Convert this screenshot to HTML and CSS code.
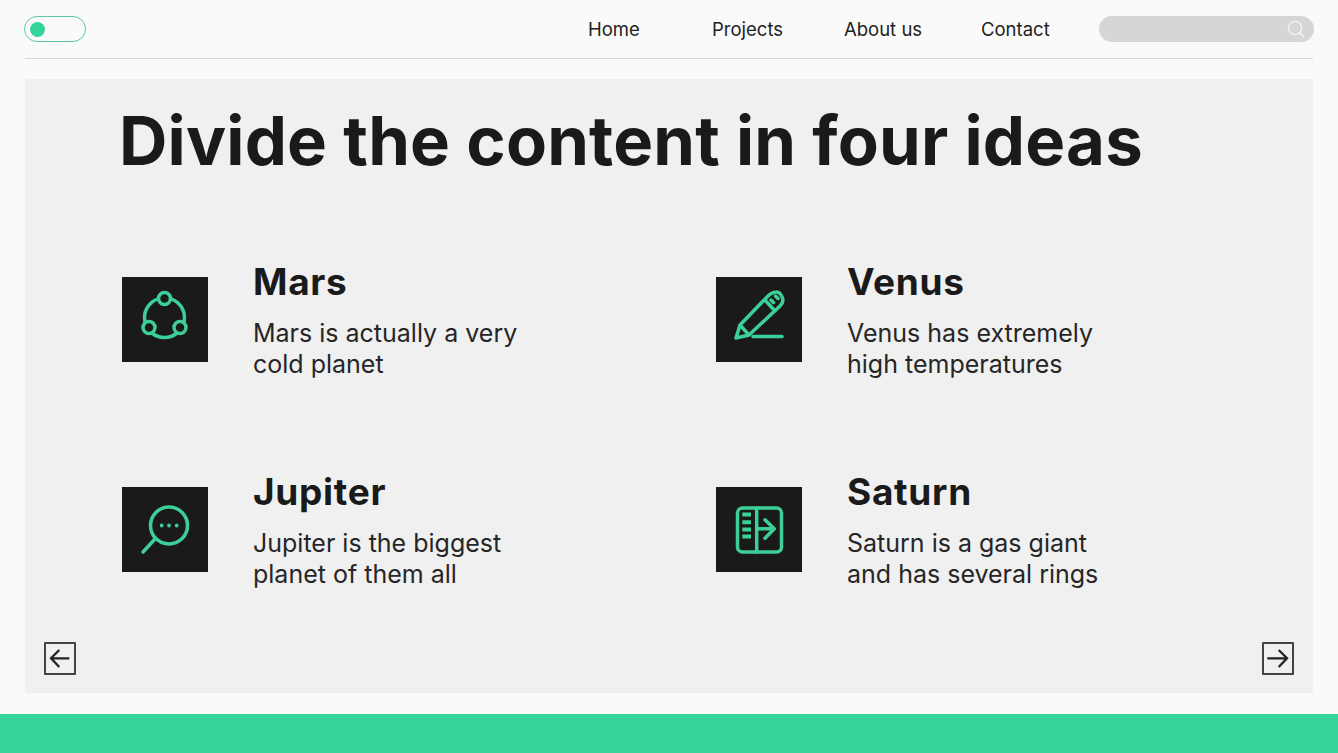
FILE: index.html
```html
<!DOCTYPE html>
<html lang="en">
<head>
<meta charset="utf-8">
<title>Divide the content in four ideas</title>
<link rel="stylesheet" href="styles.css">
</head>
<body>
<header class="topbar">
  <div class="toggle"><span class="toggle-knob"></span></div>
  <nav class="nav">
    <a class="nav-home">Home</a>
    <a class="nav-projects">Projects</a>
    <a class="nav-about">About us</a>
    <a class="nav-contact">Contact</a>
  </nav>
  <div class="search">
    <svg class="search-icon" viewBox="0 0 18 18"><circle cx="8" cy="8" r="6.6"/><path d="M12.8 12.8 16.8 17"/></svg>
  </div>
</header>
<main class="panel">
  <h1 class="title">Divide the content in four ideas</h1>
  <section class="ideas">
    <article class="idea">
      <div class="tile">
        <svg class="tile-icon" viewBox="0 0 60 60"><circle cx="29.500" cy="8.500" r="6"/><circle cx="14" cy="37.500" r="6"/><circle cx="45" cy="37.500" r="6"/><path d="M23 8.800A20 20 0 0 0 10 32M36 8.800A20 20 0 0 1 49 32M17.500 43.500A20 20 0 0 0 41.500 43.500"/></svg>
      </div>
      <div class="idea-text">
        <h2>Mars</h2>
        <p>Mars is actually a very<br>cold planet</p>
      </div>
    </article>
    <article class="idea">
      <div class="tile">
        <svg class="tile-icon" viewBox="0 0 60 60"><path d="M7 48 11 35 39 6C44 1 50 1 52 5 55 9 54 13 51 16L20 45ZM11 35 20 45M36 10 46 21M42 10 44.500 12.500M46.500 6 49 8.500"/><path d="M24 46.500H53"/></svg>
      </div>
      <div class="idea-text">
        <h2>Venus</h2>
        <p>Venus has extremely<br>high temperatures</p>
      </div>
    </article>
    <article class="idea">
      <div class="tile">
        <svg class="tile-icon" viewBox="0 0 60 60"><circle cx="34" cy="25.500" r="18.500"/><path d="M20 39 8 52"/><path class="dots" d="M26.700 25.500h.01M34 25.500h.01M41.700 25.500h.01"/></svg>
      </div>
      <div class="idea-text">
        <h2>Jupiter</h2>
        <p>Jupiter is the biggest<br>planet of them all</p>
      </div>
    </article>
    <article class="idea">
      <div class="tile">
        <svg class="tile-icon" viewBox="0 0 60 60"><rect x="8.500" y="8" width="44" height="44" rx="5"/><path d="M27.700 8V52M28 28.800H45M36 19.800 45.300 28.800 36 38.200"/><path class="bars" d="M13.300 14.500H22M13.300 22.200H22M13.300 29.500H22M13.300 36.500H22"/></svg>
      </div>
      <div class="idea-text">
        <h2>Saturn</h2>
        <p>Saturn is a gas giant<br>and has several rings</p>
      </div>
    </article>
  </section>
  <div class="pager">
    <button class="arrow" type="button" aria-label="Previous"><svg viewBox="0 0 28 29"><path d="M23.300 14.300H5M13.300 6 5 14.300 13.300 23"/></svg></button>
    <button class="arrow" type="button" aria-label="Next"><svg viewBox="0 0 28 29"><path d="M3.300 14.300H23M14.700 6 23 14.300 14.700 23"/></svg></button>
  </div>
</main>
<footer class="footer"></footer>
</body>
</html>
```
FILE: styles.css
```css
* { box-sizing: border-box; }
html, body { margin: 0; padding: 0; }
body {
  width: 1338px;
  height: 753px;
  overflow: hidden;
  background: #fafafa;
  color: #1a1a1a;
  font-family: "Inter", "Liberation Sans", sans-serif;
  display: flex;
  flex-direction: column;
}
.topbar {
  height: 59px;
  margin: 0 25px;
  border-bottom: 1px solid #d6d6d6;
  display: flex;
  align-items: flex-start;
  padding-top: 16px;
}
.toggle {
  width: 62px;
  height: 26px;
  margin-left: -1px;
  border: 1.500px solid #5cc9a0;
  border-radius: 13px;
  display: flex;
  align-items: center;
  padding-left: 5px;
}
.toggle-knob {
  width: 15px;
  height: 15px;
  border-radius: 50%;
  background: #34d399;
}
.nav {
  margin-left: auto;
  display: flex;
  font-size: 18.500px;
  line-height: 26px;
  font-weight: 400;
  color: #222;
}
.nav-home { width: 124px; }
.nav-projects { width: 132px; }
.nav-about { width: 137px; }
.nav-contact { width: 118px; }
.search {
  width: 215px;
  height: 26px;
  margin-right: -1px;
  border-radius: 13px;
  background: #d6d6d6;
  display: flex;
  align-items: center;
  justify-content: flex-end;
  padding-right: 9px;
}
.search-icon {
  width: 18px;
  height: 18px;
  fill: none;
  stroke: #f4f4f4;
  stroke-width: 1.300;
}
.panel {
  height: 614px;
  margin: 20px 25px 0;
  background: #f0f0f0;
  padding: 24px 19px 18px;
  display: flex;
  flex-direction: column;
}
.title {
  margin: 0 0 0 75px;
  font-size: 67px;
  line-height: 76px;
  font-weight: 700;
  letter-spacing: 0.200px;
  white-space: nowrap;
  color: #1a1a1a;
}
.ideas {
  margin: 95px 0 0 78px;
  display: grid;
  grid-template-columns: 594px 480px;
  grid-auto-rows: 100px;
  row-gap: 110px;
}
.idea {
  display: flex;
  align-items: flex-start;
  gap: 45px;
}
.tile {
  width: 86px;
  height: 85px;
  margin-top: 3px;
  background: #1a1a1a;
  display: flex;
  align-items: center;
  justify-content: center;
  flex: none;
}
.tile-icon {
  width: 60px;
  height: 60px;
  fill: none;
  stroke: #3ccf98;
  stroke-width: 3.500;
  stroke-linecap: round;
  stroke-linejoin: round;
}
.tile-icon .dots { stroke-width: 3.800; }
.tile-icon .bars { stroke-width: 4; stroke-linecap: butt; }
.idea-text { margin-top: -14px; }
.idea-text h2 {
  margin: 0;
  font-size: 37px;
  line-height: 44px;
  font-weight: 700;
  letter-spacing: 0.700px;
}
.idea-text p {
  margin: 14px 0 0;
  font-size: 25px;
  line-height: 31px;
  font-weight: 400;
  color: #262626;
}
.pager {
  display: flex;
  justify-content: space-between;
  margin-top: auto;
}
.arrow {
  width: 32px;
  height: 33px;
  padding: 0;
  background: transparent;
  border: 2px solid #444;
  border-radius: 1px;
  display: flex;
  align-items: center;
  justify-content: center;
}
.arrow svg {
  width: 28px;
  height: 29px;
  fill: none;
  stroke: #222;
  stroke-width: 2.300;
}
.footer {
  margin-top: 21px;
  height: 39px;
  background: #34d399;
  flex: none;
}
```
